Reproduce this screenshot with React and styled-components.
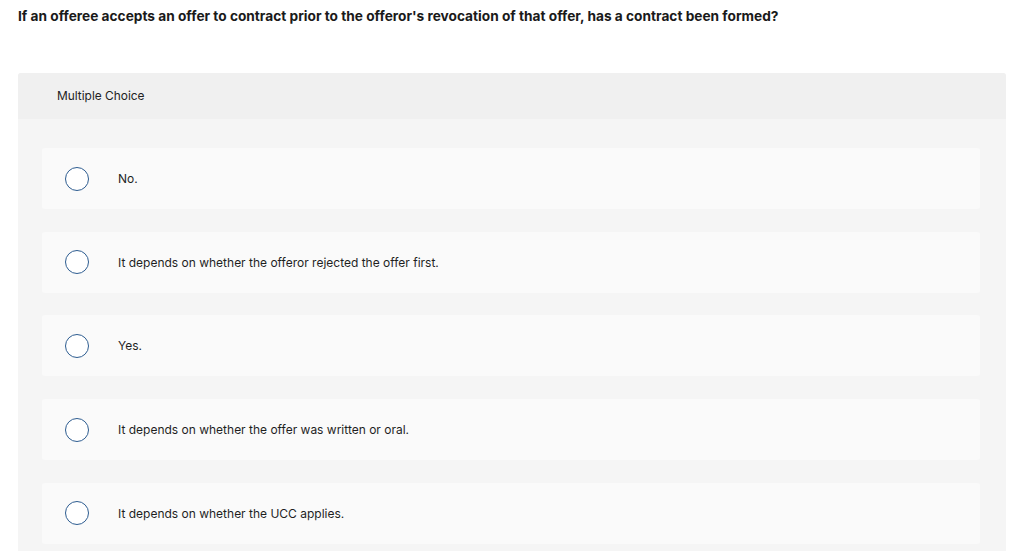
import React from 'react';
import styled, { createGlobalStyle } from 'styled-components';

const Global = createGlobalStyle`
  html, body {
    margin: 0;
    padding: 0;
    background: #ffffff;
    font-family: Inter, "Liberation Sans", Arial, sans-serif;
    color: #1f1f1f;
  }
`;

const options = [
  'No.',
  'It depends on whether the offeror rejected the offer first.',
  'Yes.',
  'It depends on whether the offer was written or oral.',
  'It depends on whether the UCC applies.',
];

const Page = styled.div`
  padding: 8px 18px 0 18px;
`;

const Question = styled.h1`
  margin: 0;
  font-size: 13.7px;
  font-weight: 700;
  line-height: 16px;
  color: #1a1a1a;
`;

const Panel = styled.div`
  margin-top: 49px;
  width: 988px;
  background: #f5f5f5;
  border-radius: 3px 3px 0 0;
`;

const PanelHeader = styled.div`
  height: 46px;
  display: flex;
  align-items: center;
  padding-left: 39px;
  padding-bottom: 1px;
  box-sizing: border-box;
  background: #f0f0f0;
  font-size: 11.9px;
  color: #222;
  border-radius: 3px 3px 0 0;
`;

const List = styled.div`
  display: flex;
  flex-direction: column;
  gap: 22.7px;
  padding: 29px 26px 24px 24px;
`;

const Option = styled.label`
  height: 61px;
  display: flex;
  align-items: center;
  background: #fafafa;
  border-radius: 3px;
  padding-left: 23px;
  cursor: pointer;
`;

const Radio = styled.span`
  width: 24px;
  height: 24px;
  box-sizing: border-box;
  border: 1px solid #2d5c90;
  border-radius: 50%;
  background: #ffffff;
  flex-shrink: 0;
`;

const OptionText = styled.span`
  margin-left: 29px;
  font-size: 12px;
  color: #1f1f1f;
`;

export default function App() {
  return (
    <Page>
      <Global />
      <Question>
        If an offeree accepts an offer to contract prior to the offeror's revocation of that offer, has a contract been formed?
      </Question>
      <Panel>
        <PanelHeader>Multiple Choice</PanelHeader>
        <List>
          {options.map((o) => (
            <Option key={o}>
              <Radio />
              <OptionText>{o}</OptionText>
            </Option>
          ))}
        </List>
      </Panel>
    </Page>
  );
}
